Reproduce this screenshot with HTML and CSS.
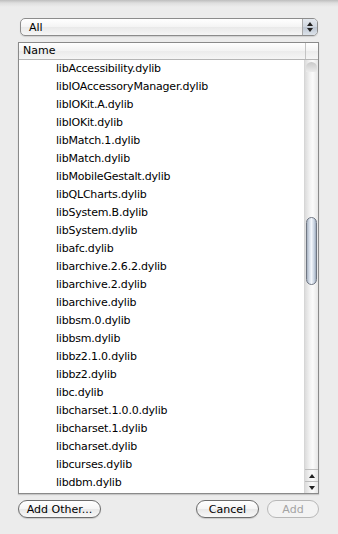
FILE: index.html
```html
<!DOCTYPE html>
<html lang="en">
<head>
    <meta charset="UTF-8">
    <title>Add Frameworks and Libraries</title>
    <link rel="stylesheet" href="styles.css">
</head>
<body>
    <div class="sheet">
        <div class="popup">
            <span class="popup-label">All</span>
            <span class="stepper">
                <span class="tri up"></span>
                <span class="tri down"></span>
            </span>
        </div>

        <div class="table">
            <div class="table-head">
                <div class="head-cell">Name</div>
                <div class="head-corner"></div>
            </div>
            <div class="table-body">
                <ul class="rows" id="rows"></ul>
                <div class="scrollbar">
                    <div class="cap"></div>
                    <div class="track">
                        <div class="thumb"></div>
                    </div>
                    <div class="arrow"><span class="tri up"></span></div>
                    <div class="arrow"><span class="tri down"></span></div>
                </div>
            </div>
        </div>

        <div class="actions">
            <button class="btn">Add Other...</button>
            <div class="spacer"></div>
            <button class="btn">Cancel</button>
            <button class="btn" disabled>Add</button>
        </div>
    </div>

    <script>
        const rowList = document.getElementById("rows");
        const libs = [
            "libAccessibility.dylib", "libIOAccessoryManager.dylib", "libIOKit.A.dylib",
            "libIOKit.dylib", "libMatch.1.dylib", "libMatch.dylib", "libMobileGestalt.dylib",
            "libQLCharts.dylib", "libSystem.B.dylib", "libSystem.dylib", "libafc.dylib",
            "libarchive.2.6.2.dylib", "libarchive.2.dylib", "libarchive.dylib", "libbsm.0.dylib",
            "libbsm.dylib", "libbz2.1.0.dylib", "libbz2.dylib", "libc.dylib",
            "libcharset.1.0.0.dylib", "libcharset.1.dylib", "libcharset.dylib",
            "libcurses.dylib", "libdbm.dylib"
        ];

        libs.forEach(name => {
            const li = document.createElement("li");
            li.textContent = name;
            rowList.appendChild(li);
        });
    </script>
</body>
</html>
```

FILE: styles.css
```css
* {
    margin: 0;
    padding: 0;
    box-sizing: border-box;
}

body {
    width: 338px;
    height: 534px;
    overflow: hidden;
    background: #ececec;
    font-family: 'DejaVu Sans', 'Liberation Sans', sans-serif;
    font-size: 11px;
    color: #000;
}

.sheet {
    height: 534px;
    padding: 18px 19px 0 18px;
    display: flex;
    flex-direction: column;
    /* shadow of the window title bar */
    background: linear-gradient(#bdbdbd, #dedede 3px, #ececec 7px, #ececec);
}

/* popup button */
.popup {
    height: 18px;
    margin: 0 1px 0 2px;
    display: flex;
    align-items: center;
    border: 1px solid #8c8c8c;
    border-radius: 5px;
    background: linear-gradient(#ffffff, #f4f4f4 50%, #e9e9e9 51%, #f6f6f6);
    box-shadow: 0 1px 1px rgba(0, 0, 0, 0.12);
    overflow: hidden;
}

.popup-label {
    flex: 1;
    padding-left: 8px;
    font-size: 11px;
}

.stepper {
    width: 15px;
    height: 100%;
    display: flex;
    flex-direction: column;
    align-items: center;
    justify-content: center;
    gap: 2px;
    border-left: 1px solid #a8a8a8;
    background: linear-gradient(#e3e8ee, #cfd6df 50%, #bcc5d1 51%, #dde3ea);
}

.tri {
    width: 0;
    height: 0;
    border-left: 3px solid transparent;
    border-right: 3px solid transparent;
}

.tri.up {
    border-bottom: 4px solid #222;
}

.tri.down {
    border-top: 4px solid #222;
}

/* table */
.table {
    margin-top: 6px;
    height: 452px;
    border: 1px solid #8a8a8a;
    background: #fff;
    display: flex;
    flex-direction: column;
    box-shadow: 0 1px 1px rgba(0, 0, 0, 0.15);
}

.table-head {
    height: 17px;
    display: flex;
    border-bottom: 1px solid #b5b5b5;
    background: linear-gradient(#ffffff, #f3f3f3 50%, #ebebeb 51%, #f5f5f5);
}

.head-cell {
    flex: 1;
    padding-left: 4px;
    line-height: 16px;
    font-size: 11px;
}

.head-corner {
    width: 13px;
    border-left: 1px solid #c3c3c3;
}

.table-body {
    flex: 1;
    display: flex;
    overflow: hidden;
}

.rows {
    flex: 1;
    list-style: none;
    overflow: hidden;
}

.rows li {
    height: 18px;
    line-height: 18px;
    padding-left: 37px;
    font-size: 11px;
    letter-spacing: -0.2px;
    white-space: nowrap;
}

/* scroll bar */
.scrollbar {
    width: 14px;
    display: flex;
    flex-direction: column;
    border-left: 1px solid #d6d6d6;
    background: linear-gradient(90deg, #dcdcdc, #f4f4f4 40%, #fbfbfb 60%, #e6e6e6);
}

.cap {
    height: 10px;
    margin: 2px 1px 0;
    border-radius: 7px 7px 0 0;
    background: linear-gradient(#c9c9c9, #ececec);
}

.track {
    flex: 1;
    position: relative;
}

.thumb {
    position: absolute;
    top: 145px;
    left: 1px;
    width: 11px;
    height: 68px;
    border: 1px solid #6f7682;
    border-radius: 6px;
    background: linear-gradient(90deg, #a9b4c3, #dbe3ee 30%, #f2f6fb 50%, #c7d2e0 80%, #9aa6b7);
}

.arrow {
    height: 12px;
    display: flex;
    align-items: center;
    justify-content: center;
    border-top: 1px solid #bdbdbd;
}

/* buttons */
.actions {
    margin-top: 6px;
    display: flex;
    align-items: center;
    gap: 8px;
}

.spacer {
    flex: 1;
}

.btn {
    height: 18px;
    padding: 0 6px;
    font-family: 'DejaVu Sans', 'Liberation Sans', sans-serif;
    font-size: 11px;
    color: #000;
    white-space: nowrap;
    border: 1px solid #6c6c6c;
    border-radius: 9px;
    background: linear-gradient(#ffffff, #f5f5f5 50%, #e8e8e8 51%, #f8f8f8);
    box-shadow: 0 1px 1px rgba(0, 0, 0, 0.15);
}

.btn:first-child {
    width: 83px;
}

.btn:nth-child(3) {
    width: 63px;
}

.btn[disabled] {
    width: 52px;
    color: #a3a3a3;
    border-color: #b8b8b8;
    background: #f3f3f3;
    box-shadow: none;
}
```
